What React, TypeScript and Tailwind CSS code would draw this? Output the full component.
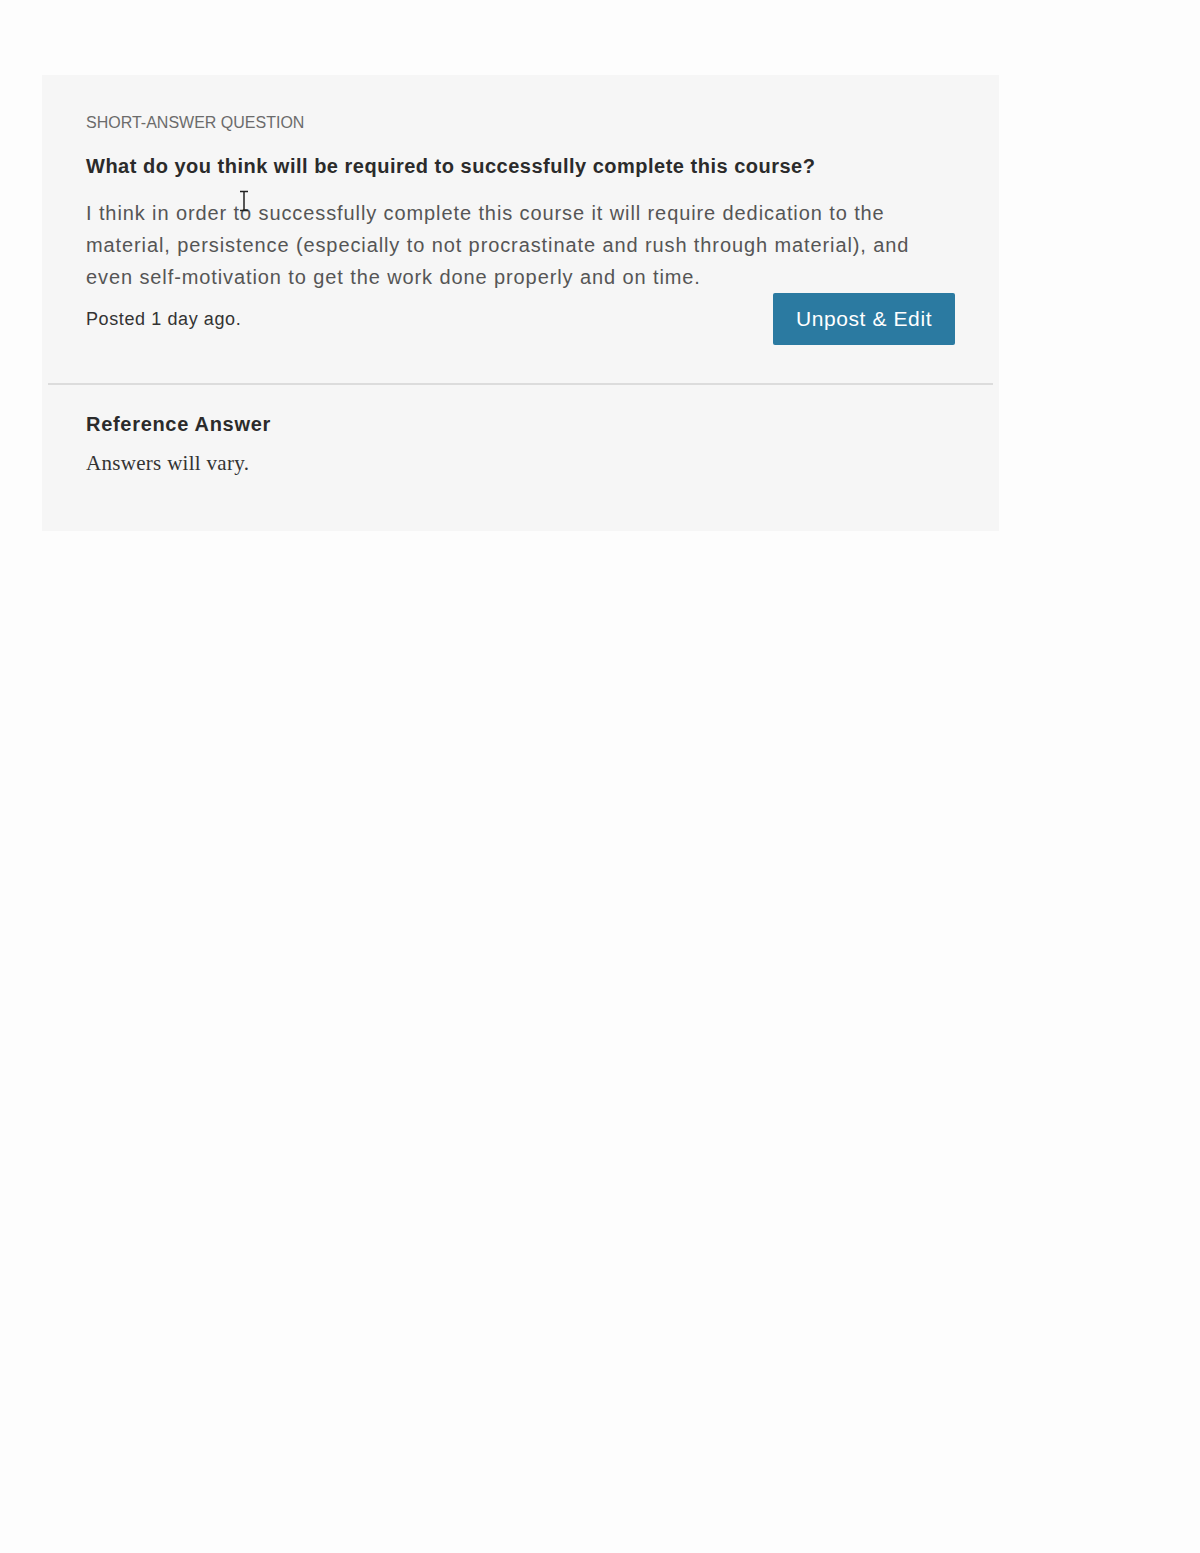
const Cursor = () => (
  <svg className="absolute left-[238px] top-[190px]" width="12" height="22" viewBox="0 0 12 22" fill="none">
    <path d="M2 1.5h8M6 1.5v19M2 20.5h8" stroke="#222" strokeWidth="1.5" />
  </svg>
);

const App = () => {
  return (
    <div className="relative min-h-[1553px] w-[1200px] bg-[#fdfdfd] pt-[75px] pl-[42px] font-['Liberation_Sans',Arial,sans-serif]">
      <div className="w-[957px] bg-[#f6f6f6] pb-[57px]">
        <div className="px-[44px] pt-[37px]">
          <p className="text-[16px] leading-[22px] text-[#6b6b6b]">SHORT-ANSWER QUESTION</p>
          <h2 className="mt-[20px] text-[20px] font-bold leading-[24px] tracking-[0.5px] text-[#2b2b2b]">
            What do you think will be required to successfully complete this course?
          </h2>
          <p className="mt-[19px] text-[20px] leading-[32px] tracking-[0.9px] text-[#555]">
            I think in order to successfully complete this course it will require dedication to the
            <br />
            material, persistence (especially to not procrastinate and rush through material), and
            <br />
            even self-motivation to get the work done properly and on time.
          </p>
          <div className="flex items-start justify-between">
            <p className="mt-[15px] text-[18px] leading-[22px] tracking-[0.6px] text-[#333]">Posted 1 day ago.</p>
            <button className="h-[52px] w-[182px] rounded-[2px] bg-[#2b7aa1] text-[21px] tracking-[0.6px] text-white">
              Unpost &amp; Edit
            </button>
          </div>
        </div>
        <div className="mx-[6px] mt-[38px] h-[2px] bg-[#dcdcdc]" />
        <div className="px-[44px] pt-[27px]">
          <h3 className="text-[20px] font-bold leading-[24px] tracking-[0.7px] text-[#2b2b2b]">Reference Answer</h3>
          <p className="mt-[16px] font-['Liberation_Serif','Times_New_Roman',serif] text-[21px] leading-[22px] tracking-[0.3px] text-[#333]">
            Answers will vary.
          </p>
        </div>
      </div>
      <Cursor />
    </div>
  );
};

export default App;
